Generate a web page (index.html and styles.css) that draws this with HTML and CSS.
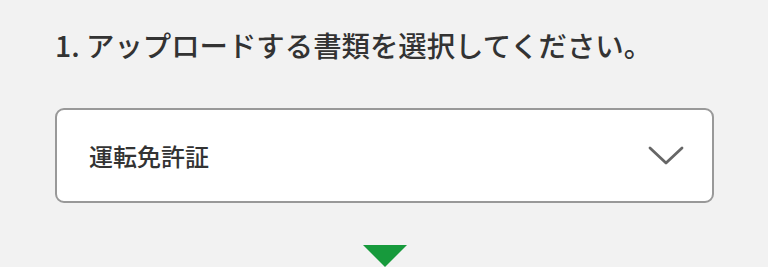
FILE: index.html
```html
<!DOCTYPE html>
<html lang="ja">
<head>
<meta charset="utf-8">
<link rel="stylesheet" href="styles.css">
</head>
<body>
<main class="page">
  <h2 class="step-title">1. アップロードする書類を選択してください。</h2>
  <div class="select">
    <span class="select-value">運転免許証</span>
    <svg class="chevron" width="36" height="20" viewBox="0 0 36 20" aria-hidden="true">
      <path d="M2 2 L18 17 L34 2" fill="none" stroke="#666" stroke-width="2.8" stroke-linecap="round" stroke-linejoin="round"/>
    </svg>
  </div>
  <div class="arrow-row"><span class="arrow"></span></div>
</main>
</body>
</html>
```
FILE: styles.css
```css
html, body {
  margin: 0;
  padding: 0;
  background: #f2f2f2;
}
body {
  font-family: "Noto Sans CJK JP", "Noto Sans", sans-serif;
  color: #333;
}
.page {
  width: 768px;
  height: 267px;
  overflow: hidden;
  padding: 25px 54px 0 55px;
  box-sizing: border-box;
  display: flex;
  flex-direction: column;
}
.step-title {
  margin: 0;
  font-size: 28.4px;
  font-weight: 500;
  line-height: 40px;
  color: #333;
  letter-spacing: 0;
}
.select {
  margin-top: 43px;
  height: 97px;
  box-sizing: border-box;
  border: 2px solid #999;
  border-radius: 9px;
  background: #fff;
  display: flex;
  align-items: center;
  justify-content: space-between;
  padding: 0 28px 0 32px;
}
.select-value {
  font-size: 24px;
  font-weight: 500;
  color: #333;
}
.chevron {
  display: block;
}
.arrow-row {
  display: flex;
  justify-content: center;
  margin-top: 42px;
  padding-right: 0;
}
.arrow {
  width: 0;
  height: 0;
  border-left: 22px solid transparent;
  border-right: 22px solid transparent;
  border-top: 22px solid #179a3c;
}
```
